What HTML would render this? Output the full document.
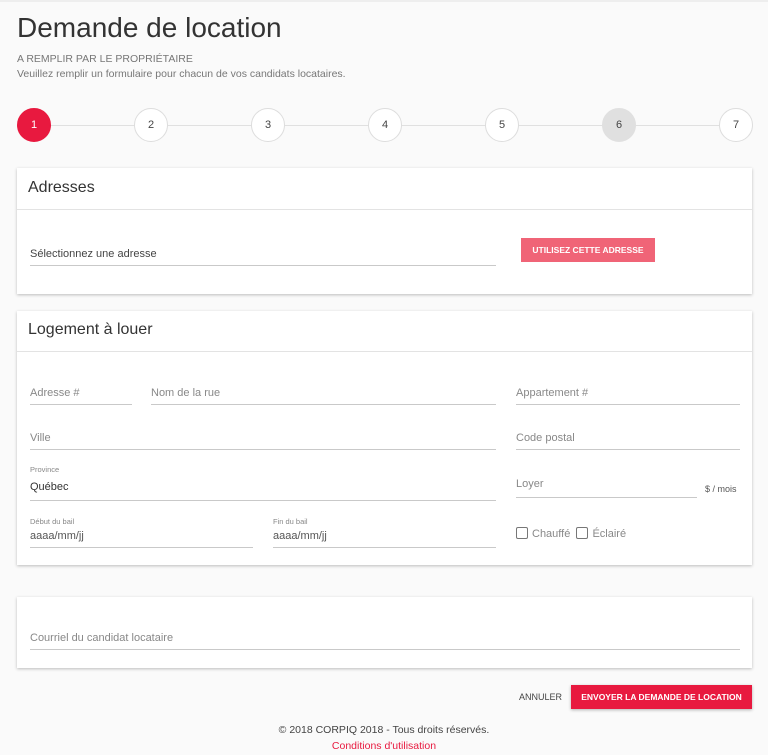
<!DOCTYPE html><html><head><meta charset="utf-8"><style>
*{margin:0;padding:0;box-sizing:border-box}
body{width:768px;height:755px;background:#fafafa;font-family:"Liberation Sans",sans-serif;position:relative;overflow:hidden;color:#333}
.a{position:absolute}
.card{position:absolute;left:17px;width:735px;background:#fff;box-shadow:0 1px 3px rgba(0,0,0,.25)}
.hd{position:absolute;left:0;right:0;border-bottom:1px solid #e3e3e3;font-size:16px;color:#333;padding-left:11px}
.f{position:absolute;border-bottom:1px solid #c9c9c9;font-size:11px;color:#888;padding-bottom:5px}
.lb{position:absolute;font-size:7.5px;color:#888}
.c{position:absolute;width:34px;height:34px;border-radius:50%;border:1px solid #ddd;background:#fff;font-size:11px;color:#444;text-align:center;line-height:32px;top:108px}
.cb{display:inline-block;width:12px;height:12px;border:1.5px solid #777;border-radius:2px;vertical-align:-2px;margin-right:4px}
</style></head><body>
<div class="a" style="left:0;top:0;width:768px;height:2px;background:#eee"></div>
<div class="a" style="left:17px;top:12px;font-size:28px;color:#333">Demande de location</div>
<div class="a" style="left:17px;top:53px;font-size:10.5px;color:#777">A REMPLIR PAR LE PROPRIÉTAIRE</div>
<div class="a" style="left:17px;top:68px;font-size:10.5px;color:#777">Veuillez remplir un formulaire pour chacun de vos candidats locataires.</div>
<div class="a" style="left:34px;top:125px;width:702px;height:1px;background:#e0e0e0"></div>
<div class="c" style="left:17px;background:#e8193f;border-color:#e8193f;color:#fff">1</div>
<div class="c" style="left:134px">2</div>
<div class="c" style="left:251px">3</div>
<div class="c" style="left:368px">4</div>
<div class="c" style="left:485px">5</div>
<div class="c" style="left:602px;background:#e0e0e0;border-color:#e0e0e0">6</div>
<div class="c" style="left:719px">7</div>

<div class="card" style="top:168px;height:126px">
<div class="hd" style="top:0;height:42px;line-height:40px">Adresses</div>
<div class="f" style="left:13px;top:80px;width:466px;color:#444">Sélectionnez une adresse</div>
<div class="a" style="left:504px;top:70px;width:134px;height:24px;background:#f06477;color:#fff;font-size:8.5px;font-weight:bold;text-align:center;line-height:24px">UTILISEZ CETTE ADRESSE</div>
</div>

<div class="card" style="top:311px;height:254px">
<div class="hd" style="top:0;height:41px;line-height:38px">Logement à louer</div>
<div class="f" style="left:13px;top:76px;width:102px">Adresse #</div>
<div class="f" style="left:134px;top:76px;width:345px">Nom de la rue</div>
<div class="f" style="left:499px;top:76px;width:224px">Appartement #</div>
<div class="f" style="left:13px;top:121px;width:466px">Ville</div>
<div class="f" style="left:499px;top:121px;width:224px">Code postal</div>
<div class="lb" style="left:13px;top:154px">Province</div>
<div class="f" style="left:13px;top:170px;width:466px;color:#333;padding-bottom:7px">Québec</div>
<div class="f" style="left:499px;top:167px;width:181px;padding-bottom:7px">Loyer</div>
<div class="a" style="left:688px;top:173px;font-size:9px;color:#555">$ / mois</div>
<div class="lb" style="left:13px;top:206px">Début du bail</div>
<div class="f" style="left:13px;top:219px;width:223px;color:#555">aaaa/mm/jj</div>
<div class="lb" style="left:256px;top:206px">Fin du bail</div>
<div class="f" style="left:256px;top:219px;width:223px;color:#555">aaaa/mm/jj</div>
<div class="a" style="left:499px;top:216px;font-size:11px;color:#888"><span class="cb"></span>Chauffé &nbsp;<span class="cb"></span>Éclairé</div>
</div>

<div class="card" style="top:597px;height:71px">
<div class="f" style="left:13px;top:35px;width:710px">Courriel du candidat locataire</div>
</div>

<div class="a" style="left:519px;top:692px;font-size:9px;color:#444">ANNULER</div>
<div class="a" style="left:571px;top:685px;width:181px;height:24px;background:#e8193f;color:#fff;font-size:8.5px;font-weight:bold;text-align:center;line-height:24px;box-shadow:0 1px 3px rgba(0,0,0,.3)">ENVOYER LA DEMANDE DE LOCATION</div>
<div class="a" style="left:0;width:768px;top:724px;text-align:center;font-size:10.5px;color:#444">© 2018 CORPIQ 2018 - Tous droits réservés.</div>
<div class="a" style="left:0;width:768px;top:740px;text-align:center;font-size:10.5px;color:#e8193f">Conditions d'utilisation</div>
</body></html>
